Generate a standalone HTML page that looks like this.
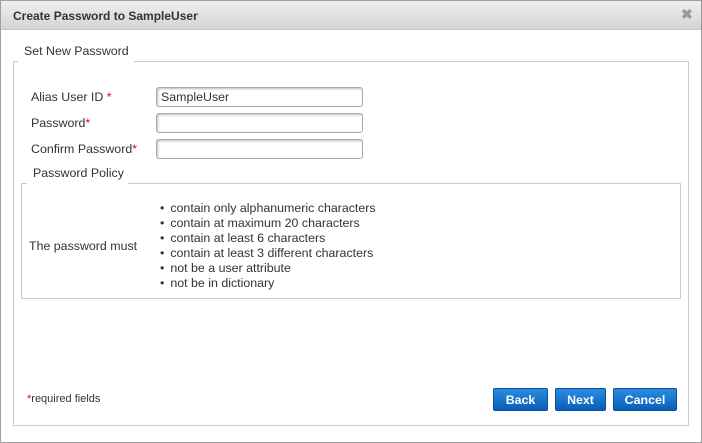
<!DOCTYPE html>
<html><head><style>
*{margin:0;padding:0;box-sizing:border-box}
body{width:702px;height:443px;background:#fff;font-family:"Liberation Sans",Arial,sans-serif;font-size:12.4px;color:#333;position:relative;overflow:hidden}
.a{position:absolute;white-space:nowrap}
.dlg{left:0;top:0;width:702px;height:443px;border:1px solid #a0a0a0}
.hdr{left:1px;top:1px;width:700px;height:29px;background:linear-gradient(#f0f0f0,#d4d4d4);border-bottom:1px solid #c4c4c4}
.t{left:13px;top:9px;font-weight:bold;font-size:12px;color:#333}
.x{left:681px;top:6px;font-size:14px;font-weight:bold;color:#999}
.panel{left:13px;top:61px;width:676px;height:365px;border:1px solid #ccc}
.leg{background:#fff;padding:0 6px}
.in{left:156px;width:207px;height:20px;border:1px solid #aaa;border-radius:3px;box-shadow:inset 1px 1px 2px #bbb;padding:2px 4px;font-size:12.4px}
.r{color:#e00}
.pol{left:21px;top:183px;width:660px;height:116px;border:1px solid #ccc}
.btn{top:388px;height:23px;background:linear-gradient(#2b8be0,#0a5fb8);color:#fff;font-weight:bold;text-align:center;line-height:22px;border:1px solid #0a4f9a;border-radius:2px;font-size:12.4px}
ul{list-style:none}
li{line-height:15px}
li:before{content:"•";margin-right:6px}
</style></head><body>
<div class="a dlg"></div>
<div class="a hdr"></div>
<div class="a t">Create Password to SampleUser</div>
<div class="a x">✖</div>
<div class="a panel"></div>
<div class="a leg" style="left:18px;top:44px;width:116px;height:18px">Set New Password</div>
<div class="a" style="left:31px;top:90px">Alias User ID<span class="r"> *</span></div>
<div class="a in" style="top:87px">SampleUser</div>
<div class="a" style="left:31px;top:116px">Password<span class="r">*</span></div>
<div class="a in" style="top:113px"></div>
<div class="a" style="left:31px;top:142px">Confirm Password<span class="r">*</span></div>
<div class="a in" style="top:139px"></div>
<div class="a pol"></div>
<div class="a leg" style="left:27px;top:166px;width:101px;height:18px">Password Policy</div>
<div class="a" style="left:29px;top:239px">The password must</div>
<ul class="a" style="left:160px;top:201px">
<li>contain only alphanumeric characters</li>
<li>contain at maximum 20 characters</li>
<li>contain at least 6 characters</li>
<li>contain at least 3 different characters</li>
<li>not be a user attribute</li>
<li>not be in dictionary</li>
</ul>
<div class="a" style="left:27px;top:393px;font-size:11px"><span class="r">*</span>required fields</div>
<div class="a btn" style="left:493px;width:55px">Back</div>
<div class="a btn" style="left:555px;width:51px">Next</div>
<div class="a btn" style="left:613px;width:64px">Cancel</div>
</body></html>
